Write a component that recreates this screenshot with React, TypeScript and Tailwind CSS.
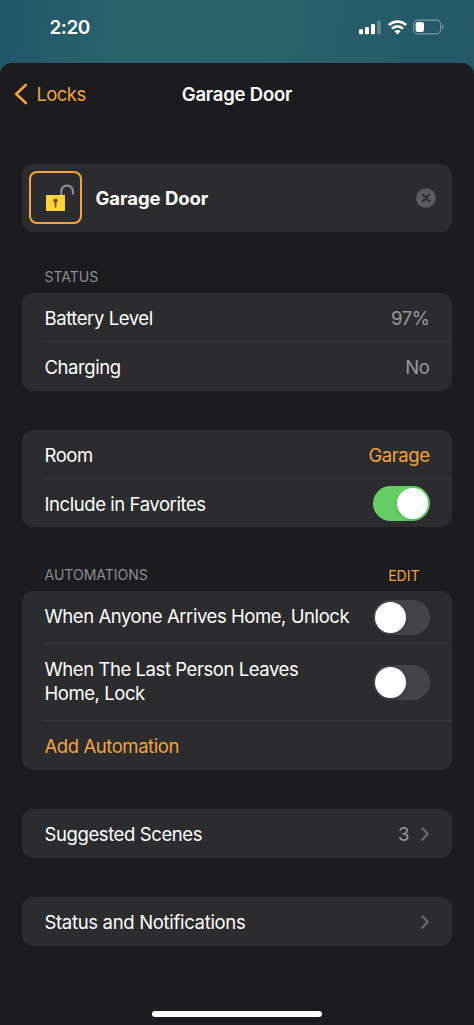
import type { ReactNode } from "react";

function StatusBar() {
  return (
    <div className="flex h-[63px] items-start justify-between pt-[15px] pr-[29px] pl-[49.5px] text-white">
      <span className="pt-px text-[19px] leading-[24px] font-semibold tracking-[-0.5px]">2:20</span>
      <div className="flex h-6 items-center">
        <svg width="22" height="15" viewBox="0 0 22 15" fill="#fff">
          <rect x="0" y="9.3" width="4" height="5" rx="1" />
          <rect x="6" y="7" width="4" height="7.3" rx="1" />
          <rect x="12" y="4" width="4" height="10.3" rx="1" />
          <rect x="18" y="0.7" width="4" height="13.6" rx="1" opacity="0.25" />
        </svg>
        <svg className="ml-[7px]" width="19" height="15" viewBox="0 0 19 15" fill="none" stroke="#fff" strokeWidth="2.7">
          <path d="M0.9 5.1a12.3 12.3 0 0 1 17.2 0" />
          <path d="M4 8.6a7.9 7.9 0 0 1 11 0" />
          <path d="M9.5 14.4 6.4 11.2a4.4 4.4 0 0 1 6.2 0Z" fill="#fff" stroke="none" />
        </svg>
        <svg className="ml-[6px]" width="32" height="16" viewBox="0 0 32 16">
          <rect x="0.6" y="1.1" width="27" height="13.8" rx="4.2" fill="none" stroke="#fff" strokeOpacity="0.4" strokeWidth="1.1" />
          <rect x="2.6" y="3" width="8.4" height="10" rx="2.2" fill="#fff" />
          <path d="M29.2 5.8c1.8.6 1.8 3.8 0 4.4Z" fill="#fff" opacity="0.45" />
        </svg>
      </div>
    </div>
  );
}

function Card({ className, children }: { className: string; children: ReactNode }) {
  return <section className={`flex flex-col rounded-[11px] bg-[#2c2c2e] ${className}`}>{children}</section>;
}

function Divider() {
  return <div className="ml-[22px] h-px shrink-0 bg-[#363638]" />;
}

function Toggle({ on = false }: { on?: boolean }) {
  return (
    <div className={`flex h-[35px] w-[57px] shrink-0 items-center rounded-full px-[2px] ${on ? "justify-end bg-[#65ce67]" : "justify-start bg-[#444348]"}`}>
      <div className="size-[31px] rounded-full bg-white shadow-[0_2px_4px_rgba(0,0,0,0.15)]" />
    </div>
  );
}

function Chevron() {
  return (
    <svg width="10" height="16" viewBox="0 0 10 16" fill="none" stroke="#69696d" strokeWidth="2.1" strokeLinecap="round" strokeLinejoin="round">
      <path d="M2 2l5.8 6L2 14" />
    </svg>
  );
}

function LockIcon() {
  return (
    <div className="flex size-[53px] items-center justify-center rounded-[8px] border-2 border-[#f0a43f]">
      <svg width="49" height="49" viewBox="0 0 49 49" fill="none">
        <path d="M30.3 22v-3.6a5.8 5.8 0 0 1 11.6 0v3" stroke="#8e8e93" strokeWidth="2.1" />
        <rect x="15" y="22" width="19" height="16" fill="#fbd33d" />
        <circle cx="24.5" cy="27.6" r="2.2" fill="#75501c" />
        <rect x="23.7" y="28" width="1.7" height="6.6" rx="0.7" fill="#75501c" />
      </svg>
    </div>
  );
}

export default function App() {
  return (
    <main className="flex h-[1025px] w-[474px] flex-col overflow-hidden bg-[linear-gradient(95deg,#23556a_0%,#29636a_22%,#2a646a_45%,#265a68_72%,#255668_100%)] font-['Inter','Liberation_Sans',sans-serif] text-[18.5px] leading-[24px] tracking-[-0.43px] text-white">
      <StatusBar />
      <div className="flex flex-1 flex-col rounded-t-[12px] bg-[#1c1c1e] px-[22px]">
        <header className="-mx-[8px] grid h-[62px] shrink-0 grid-cols-3 items-center">
          <div className="flex items-center gap-[9.5px] text-[#f0a43f]">
            <svg width="13" height="22" viewBox="0 0 13 22" fill="none" stroke="currentColor" strokeWidth="2.6" strokeLinecap="round" strokeLinejoin="round">
              <path d="M11.8 2 2.2 11l9.6 9" />
            </svg>
            <span className="tracking-[-0.6px]">Locks</span>
          </div>
          <h1 className="text-center font-semibold tracking-[-0.2px] whitespace-nowrap">Garage Door</h1>
        </header>

        <Card className="mt-[39px] h-[67.5px] shrink-0 justify-center">
          <div className="flex items-center pr-[16px] pl-[7px]">
            <LockIcon />
            <span className="ml-[13.5px] flex-1 font-bold tracking-[-0.05px]">Garage Door</span>
            <svg width="20" height="20" viewBox="0 0 20 20">
              <circle cx="10" cy="10" r="9.8" fill="#5c5c60" />
              <path d="m6.8 6.8 6.4 6.4m0-6.4-6.4 6.4" stroke="#2c2c2e" strokeWidth="2.1" strokeLinecap="round" />
            </svg>
          </div>
        </Card>

        <h2 className="mt-[35.5px] ml-[22.5px] h-[26px] text-[14px] leading-[20px] tracking-[0px] text-[#8d8d93]">STATUS</h2>
        <Card className="h-[97.5px] shrink-0">
          <div className="flex flex-1 items-center justify-between px-[22.5px] pt-px">
            <span>Battery Level</span>
            <span className="text-[#98989e]">97%</span>
          </div>
          <Divider />
          <div className="flex flex-1 items-center justify-between px-[22.5px] pt-px">
            <span>Charging</span>
            <span className="text-[#98989e]">No</span>
          </div>
        </Card>

        <Card className="mt-[39px] h-[97.5px] shrink-0">
          <div className="flex flex-1 items-center justify-between px-[22.5px] pt-[2px]">
            <span>Room</span>
            <span className="text-[#f0a43f]">Garage</span>
          </div>
          <Divider />
          <div className="flex flex-1 items-center justify-between px-[22px] pt-px">
            <span className="pt-px pl-[0.5px]">Include in Favorites</span>
            <Toggle on />
          </div>
        </Card>

        <div className="mt-[38px] flex h-[26px] shrink-0 items-start justify-between pr-[32.5px] pl-[22.5px] text-[14px] leading-[20px] tracking-[0px]">
          <h2 className="text-[#8d8d93]">AUTOMATIONS</h2>
          <span className="pt-px text-[#f0a43f]">EDIT</span>
        </div>
        <Card className="h-[179px] shrink-0">
          <div className="flex h-[52px] items-center justify-between px-[22px]">
            <span className="pb-[2px] pl-[0.5px] whitespace-nowrap">When Anyone Arrives Home, Unlock</span>
            <Toggle />
          </div>
          <Divider />
          <div className="flex h-[76px] items-center justify-between px-[22px]">
            <span className="pb-[2px] pl-[0.5px] whitespace-nowrap">
              When The Last Person Leaves
              <br />
              Home, Lock
            </span>
            <Toggle />
          </div>
          <Divider />
          <div className="flex flex-1 items-center px-[22.5px] text-[#f0a43f]">
            <span>Add Automation</span>
          </div>
        </Card>

        <Card className="mt-[39px] h-[49px] shrink-0 justify-center">
          <div className="flex items-center px-[22px]">
            <span className="flex-1 pl-[0.5px] tracking-[-0.4px]">Suggested Scenes</span>
            <span className="mr-[11px] text-[#98989e]">3</span>
            <Chevron />
          </div>
        </Card>
        <Card className="mt-[39px] h-[49px] shrink-0 justify-center">
          <div className="flex items-center px-[22px]">
            <span className="flex-1 pl-[0.5px] tracking-[-0.32px]">Status and Notifications</span>
            <Chevron />
          </div>
        </Card>

        <div className="mt-auto mb-[8.5px] h-[6px] w-[170px] self-center rounded-full bg-white" />
      </div>
    </main>
  );
}
